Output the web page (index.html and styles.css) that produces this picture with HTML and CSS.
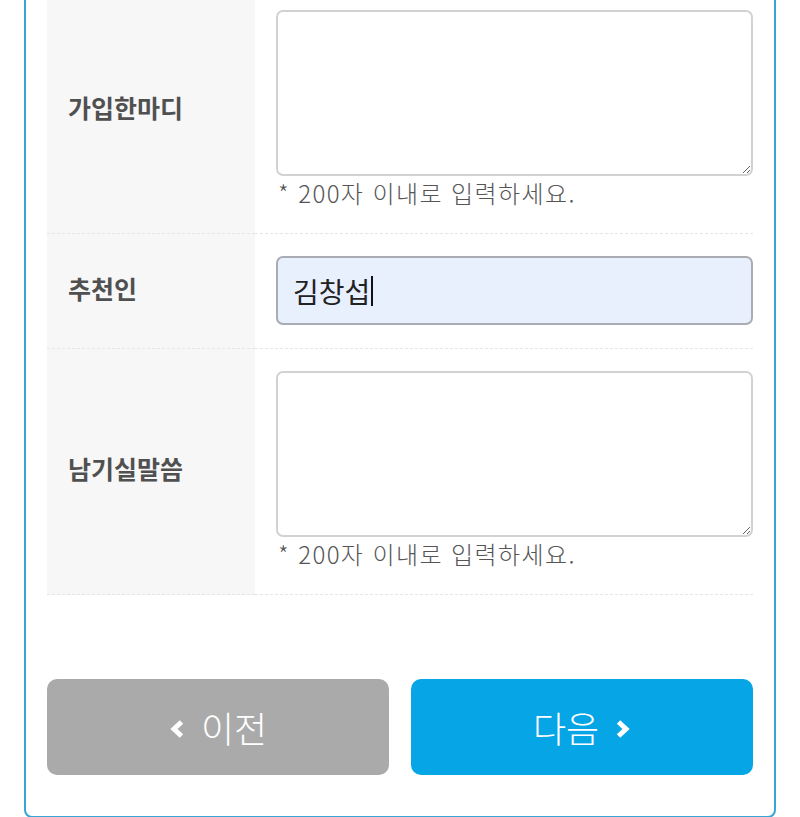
FILE: index.html
```html
<!DOCTYPE html>
<html lang="ko">

<head>
    <meta charset="UTF-8">
    <meta name="viewport" content="width=device-width, initial-scale=1.0">
    <title>회원가입</title>

    <link rel="stylesheet" href="styles.css">
</head>

<body>
    <div class="wrap">
        <div class="join-box">
            <table class="form-table">
                <tr>
                    <th>가입한마디</th>
                    <td>
                        <textarea class="txt-area"></textarea>
                        <p class="hint">* 200자 이내로 입력하세요.</p>
                    </td>
                </tr>
                <tr>
                    <th>추천인</th>
                    <td>
                        <div class="txt-input filled">김창섭<span class="caret"></span></div>
                    </td>
                </tr>
                <tr>
                    <th>남기실말씀</th>
                    <td>
                        <textarea class="txt-area"></textarea>
                        <p class="hint">* 200자 이내로 입력하세요.</p>
                    </td>
                </tr>
            </table>

            <div class="btn-row">
                <button class="btn btn-prev">
                    <svg class="chev" width="16" height="20" viewBox="0 0 16 20"><polyline points="12.5,3 5,10 12.5,17" fill="none" stroke="#fff" stroke-width="5"/></svg>
                    이전
                </button>
                <button class="btn btn-next">
                    다음
                    <svg class="chev" width="16" height="20" viewBox="0 0 16 20"><polyline points="3.5,3 11,10 3.5,17" fill="none" stroke="#fff" stroke-width="5"/></svg>
                </button>
            </div>
        </div>
    </div>
</body>

</html>
```

FILE: styles.css
```css
* {
    margin: 0px;
    padding: 0px;
    box-sizing: border-box;
}

body {
    background-color: #fff;
    font-family: "Noto Sans CJK KR", "Noto Sans", sans-serif;
    color: #444;
}

.wrap {
    padding: 0 24px;
}

.join-box {
    margin-top: -14px;
    border: 2px solid #39a4d6;
    border-radius: 8px;
    padding: 0 21px 41px;
}

.form-table {
    width: 100%;
    border-collapse: collapse;
}

.form-table th,
.form-table td {
    border-bottom: 1px dashed #e6e6e6;
}

.form-table th {
    width: 208px;
    background-color: #f7f7f7;
    text-align: left;
    padding: 0 0 7px 21px;
    font-size: 25px;
    font-weight: bold;
    color: #505050;
    vertical-align: middle;
}

.form-table td {
    padding: 22px 0 23px 21px;
}

.txt-area {
    display: block;
    width: 100%;
    height: 166px;
    border: 2px solid #d2d2d2;
    border-radius: 7px;
    background-color: #fff;
}

.hint {
    font-size: 24px;
    font-weight: 300;
    letter-spacing: 1.4px;
    line-height: 34px;
    color: #555;
    padding-left: 2px;
}

.txt-input {
    display: flex;
    align-items: center;
    height: 69px;
    border: 2px solid #a9adb3;
    border-radius: 7px;
    padding-left: 15px;
    font-size: 28px;
    color: #222;
}

.filled {
    background-color: #e8f0fe;
}

.caret {
    display: inline-block;
    width: 2px;
    height: 30px;
    background-color: #111;
    margin-left: 1px;
}

.btn-row {
    display: flex;
    gap: 22px;
    margin-top: 84px;
}

.btn {
    flex: 1;
    height: 96px;
    border: none;
    border-radius: 10px;
    color: #fff;
    font-family: "Noto Sans CJK KR", "Noto Sans", sans-serif;
    font-size: 36px;
    font-weight: 300;
    display: flex;
    justify-content: center;
    align-items: center;
    gap: 16px;
}

.chev {
    margin-top: 4px;
}

.btn-prev {
    background-color: #aaaaaa;
}

.btn-next {
    background-color: #06a5e6;
}
```
